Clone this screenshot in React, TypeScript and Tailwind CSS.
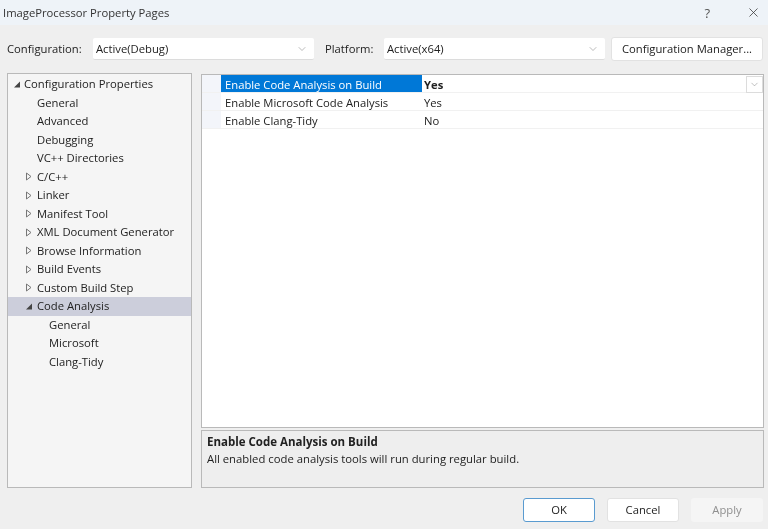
import React from 'react';
import { ChevronDown, X } from 'lucide-react';

type TreeItem = { label: string; arrow?: 'open' | 'closed'; indent: 0 | 1 | 2; selected?: boolean };

const treeItems: TreeItem[] = [
  { label: 'Configuration Properties', arrow: 'open', indent: 0 },
  { label: 'General', indent: 1 },
  { label: 'Advanced', indent: 1 },
  { label: 'Debugging', indent: 1 },
  { label: 'VC++ Directories', indent: 1 },
  { label: 'C/C++', arrow: 'closed', indent: 1 },
  { label: 'Linker', arrow: 'closed', indent: 1 },
  { label: 'Manifest Tool', arrow: 'closed', indent: 1 },
  { label: 'XML Document Generator', arrow: 'closed', indent: 1 },
  { label: 'Browse Information', arrow: 'closed', indent: 1 },
  { label: 'Build Events', arrow: 'closed', indent: 1 },
  { label: 'Custom Build Step', arrow: 'closed', indent: 1 },
  { label: 'Code Analysis', arrow: 'open', indent: 1, selected: true },
  { label: 'General', indent: 2 },
  { label: 'Microsoft', indent: 2 },
  { label: 'Clang-Tidy', indent: 2 },
];

const rows = [
  { name: 'Enable Code Analysis on Build', value: 'Yes', active: true },
  { name: 'Enable Microsoft Code Analysis', value: 'Yes', active: false },
  { name: 'Enable Clang-Tidy', value: 'No', active: false },
];

const Arrow = ({ type }: { type: 'open' | 'closed' }) => (
  <svg width="8" height="9" viewBox="0 0 8 9" className="shrink-0">
    {type === 'open' ? (
      <path d="M7 1.5V7.5H1Z" fill="#444" />
    ) : (
      <path d="M1.5 1L6 4.5L1.5 8Z" fill="none" stroke="#777" />
    )}
  </svg>
);

const Select = ({ value, width }: { value: string; width: string }) => (
  <div className={`${width} h-[22px] bg-white rounded-[2px] border-b border-[#dcdcdc] flex items-center justify-between pl-[3px] pr-[6px] shrink-0`}>
    <span>{value}</span>
    <ChevronDown className="w-[12px] h-[12px] text-[#777]" strokeWidth={1} />
  </div>
);

const Button = ({ label, kind }: { label: string; kind?: 'default' | 'disabled' }) => (
  <div
    className={`w-[72px] h-[24px] rounded-[3px] flex items-center justify-center ${
      kind === 'default'
        ? 'bg-white border border-[#5a9bd0]'
        : kind === 'disabled'
          ? 'bg-[#f5f5f5] text-[#8f8f8f]'
          : 'bg-white border border-[#e2e2e2]'
    }`}
  >
    {label}
  </div>
);

export default function App() {
  return (
    <div className="w-[768px] h-[529px] overflow-hidden bg-[#efefef] text-[#222] text-[11.25px] leading-[18px] font-['Open_Sans','Noto_Sans',sans-serif] flex flex-col blur-[0.3px]">
      {/* Title bar */}
      <div className="h-[25px] shrink-0 bg-[#eef3f8] flex items-center justify-between pl-[3px] pr-[7px]">
        <span className="text-[#333]">ImageProcessor Property Pages</span>
        <div className="flex items-center gap-[36px]">
          <span className="text-[#555] text-[13px]">?</span>
          <X className="w-[15px] h-[15px] text-[#333]" strokeWidth={1.2} />
        </div>
      </div>

      {/* Configuration row */}
      <div className="flex items-center h-[24px] mt-[12px] pl-[7px] pr-[5px] shrink-0">
        <span className="w-[86px] shrink-0">Configuration:</span>
        <Select value="Active(Debug)" width="w-[221px]" />
        <span className="w-[59px] ml-[11px] shrink-0">Platform:</span>
        <Select value="Active(x64)" width="w-[221px]" />
        <div className="ml-[6px] w-[152px] h-[24px] bg-white rounded-[3px] border border-[#e2e2e2] flex items-center justify-center shrink-0">
          Configuration Manager...
        </div>
      </div>

      {/* Main area */}
      <div className="flex gap-[9px] mt-[12px] pl-[7px] pr-[4px] h-[415px] shrink-0">
        {/* Tree */}
        <div className="w-[185px] shrink-0 bg-[#f5f5f5] border border-[#b9b9b9] pt-[1px]">
          {treeItems.map((item, i) => (
            <div key={i} className={`h-[18.5px] flex items-center relative ${item.selected ? 'bg-[#cccedb]' : ''}`}>
              <div
                className={`flex items-center ${
                  item.indent === 0 ? 'pl-[16px]' : item.indent === 1 ? 'pl-[29px]' : 'pl-[41px]'
                }`}
              >
                {item.arrow && (
                  <span className={`absolute ${item.indent === 0 ? 'left-[5px]' : 'left-[17px]'}`}>
                    <Arrow type={item.arrow} />
                  </span>
                )}
                <span>{item.label}</span>
              </div>
            </div>
          ))}
        </div>

        {/* Right side */}
        <div className="flex-1 flex flex-col gap-[2px] mt-[1px]">
          <div className="h-[354px] bg-white border border-[#b9b9b9] shrink-0">
            {rows.map((row) => (
              <div key={row.name} className="h-[18px] flex border-b border-[#f1f1f1] leading-[20px]">
                <div className="w-[19px] bg-[#f3f5fa] shrink-0" />
                <div className={`w-[201px] pl-[4px] shrink-0 ${row.active ? 'bg-[#0078d7] text-white' : ''}`}>{row.name}</div>
                <div className={`flex-1 pl-[2px] flex justify-between ${row.active ? 'font-bold' : ''}`}>
                  <span>{row.value}</span>
                  {row.active && (
                    <span className="w-[17px] h-[17px] mt-[1px] border border-[#dcdcdc] flex items-center justify-center">
                      <ChevronDown className="w-[11px] h-[11px] text-[#777]" strokeWidth={1} />
                    </span>
                  )}
                </div>
              </div>
            ))}
          </div>
          <div className="flex-1 border border-[#b9b9b9] bg-[#eeeeee] pl-[5px] pt-[2px]">
            <div className="font-bold text-[11.5px]">Enable Code Analysis on Build</div>
            <div className="text-[11.3px] -mt-[1px]">All enabled code analysis tools will run during regular build.</div>
          </div>
        </div>
      </div>

      {/* Buttons */}
      <div className="flex justify-end gap-[12px] mt-[10px] pr-[5px]">
        <Button label="OK" kind="default" />
        <Button label="Cancel" />
        <Button label="Apply" kind="disabled" />
      </div>
    </div>
  );
}
